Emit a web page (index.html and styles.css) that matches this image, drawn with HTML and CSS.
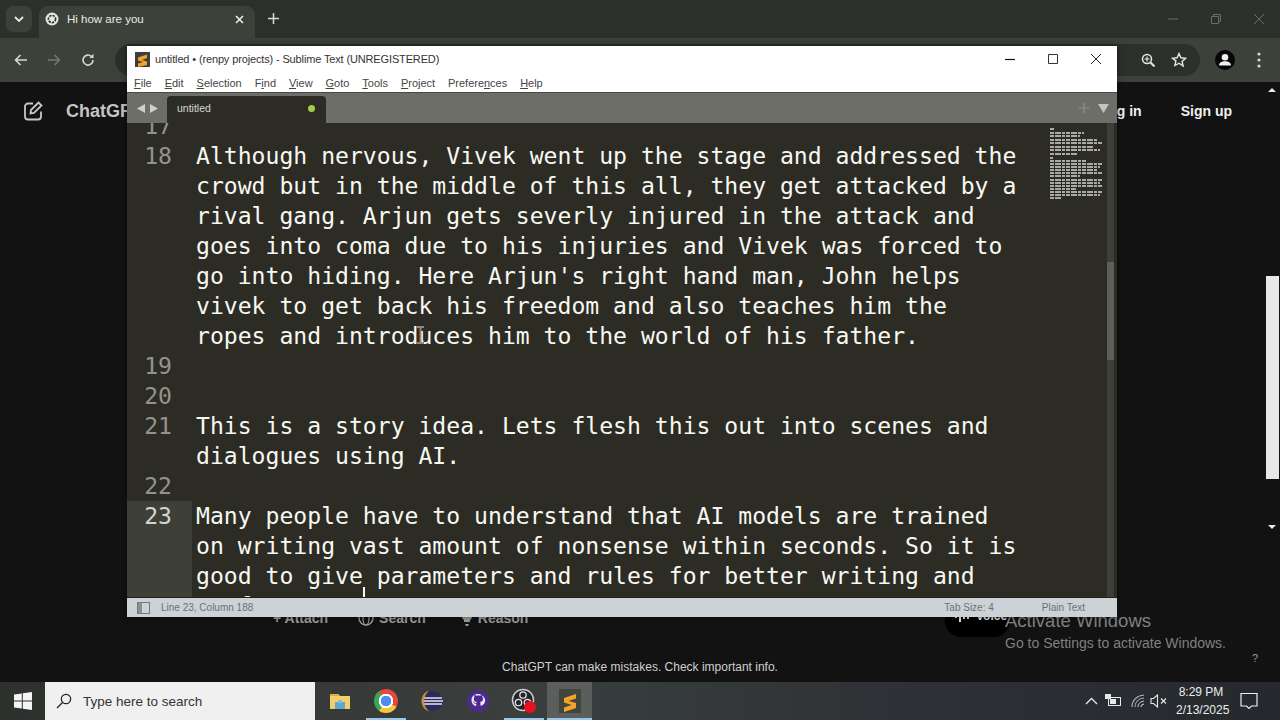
FILE: index.html
```html
<!DOCTYPE html>
<html lang="en">

<head>
    <meta charset="UTF-8" />
    <title>Hi how are you</title>
    <link rel="stylesheet" href="styles.css">
</head>

<body>
    <!-- Browser behind -->
    <div class="browser">
        <div class="tabstrip">
            <div class="tab-menu">
                <svg width="10" height="6" viewBox="0 0 10 6"><path d="M1 1l4 4 4-4" fill="none" stroke="#e6e8e4" stroke-width="1.8"/></svg>
            </div>
            <div class="tab">
                <svg class="favicon" width="14" height="14" viewBox="0 0 14 14"><circle cx="7" cy="7" r="6.5" fill="#e4e6e2"/><circle cx="7" cy="7" r="3.6" fill="none" stroke="#2b2f2a" stroke-width="1.6" stroke-dasharray="2.4 1"/></svg>
                <span class="tab-title">Hi how are you</span>
                <svg class="tab-close" width="9" height="9" viewBox="0 0 9 9"><path d="M1 1l7 7M8 1l-7 7" stroke="#f0f2ee" stroke-width="1.5"/></svg>
            </div>
            <svg class="new-tab" width="11" height="11" viewBox="0 0 11 11"><path d="M5.5 0v11M0 5.5h11" stroke="#d8dad6" stroke-width="1.5"/></svg>
            <div class="win-buttons">
                <div class="win-button"><svg width="10" height="10" viewBox="0 0 10 10"><path d="M0 5h10" stroke="#6a6e69"/></svg></div>
                <div class="win-button"><svg width="10" height="10" viewBox="0 0 10 10"><path d="M.5 2.5h7v7h-7zM2.5 2.5v-2h7v7h-2" fill="none" stroke="#6a6e69"/></svg></div>
                <div class="win-button"><svg width="10" height="10" viewBox="0 0 10 10"><path d="M0 0l10 10M10 0L0 10" stroke="#6a6e69"/></svg></div>
            </div>
        </div>
        <div class="toolbar">
            <div class="nav-button"><svg width="14" height="12" viewBox="0 0 14 12"><path d="M13 6H2M6.5 1l-5 5 5 5" fill="none" stroke="#d6d8d4" stroke-width="1.6"/></svg></div>
            <div class="nav-button"><svg width="14" height="12" viewBox="0 0 14 12"><path d="M1 6h11M7.5 1l5 5-5 5" fill="none" stroke="#747873" stroke-width="1.6"/></svg></div>
            <div class="nav-button"><svg width="14" height="14" viewBox="0 0 14 14"><path d="M12 7a5 5 0 1 1-1.500-3.500" fill="none" stroke="#d6d8d4" stroke-width="1.6"/><path d="M12.5.8V5H8.300z" fill="#d6d8d4"/></svg></div>
            <div class="address">
                <svg width="14" height="14" viewBox="0 0 14 14"><circle cx="6" cy="6" r="4.500" fill="none" stroke="#e6e8e4" stroke-width="1.5"/><path d="M6 3.500v5M3.500 6h5" stroke="#e6e8e4" stroke-width="1.2"/><path d="M9.500 9.500l4 4" stroke="#e6e8e4" stroke-width="2"/></svg>
                <svg width="16" height="16" viewBox="0 0 16 16"><path d="M8 1.500l1.900 4.300 4.600.5-3.400 3.100 1 4.600L8 11.200 3.900 13.500l1-4.600L1.500 6.300l4.600-.5z" fill="none" stroke="#e6e8e4" stroke-width="1.4"/></svg>
            </div>
            <svg class="avatar" width="20" height="20" viewBox="0 0 20 20"><circle cx="10" cy="10" r="10" fill="#060606"/><circle cx="10" cy="7.300" r="3.300" fill="#f0f0f0"/><path d="M4 15.500c0-3 3-4.300 6-4.300s6 1.300 6 4.300z" fill="#f0f0f0"/></svg>
            <svg class="dots" width="4" height="16" viewBox="0 0 4 16"><circle cx="2" cy="2" r="1.6" fill="#d6d8d4"/><circle cx="2" cy="8" r="1.6" fill="#d6d8d4"/><circle cx="2" cy="14" r="1.6" fill="#d6d8d4"/></svg>
        </div>
        <div class="page">
            <div class="page-header">
                <svg width="20" height="20" viewBox="0 0 20 20"><path d="M10 2.500H5a3 3 0 0 0-3 3v10a3 3 0 0 0 3 3h10a3 3 0 0 0 3-3v-5" fill="none" stroke="#c8c8c8" stroke-width="1.8"/><path d="M8 9l7.500-7.500 3 3L11 12l-3.500.5z" fill="none" stroke="#c8c8c8" stroke-width="1.8"/></svg>
                <span class="brand">ChatGPT</span>
                <span class="login">Log in</span>
                <span class="signup">Sign up</span>
            </div>
            <div class="composer-row">
                <span class="composer-item attach">+ Attach</span>
                <span class="composer-item search">
                    <svg width="16" height="16" viewBox="0 0 16 16"><circle cx="8" cy="8" r="7" fill="none" stroke="#9a9a9a" stroke-width="1.4"/><ellipse cx="8" cy="8" rx="3" ry="7" fill="none" stroke="#9a9a9a" stroke-width="1.2"/></svg>
                    Search
                </span>
                <span class="composer-item reason">
                    <svg width="12" height="16" viewBox="0 0 12 16"><path d="M6 1a5 5 0 0 0-3 9v2h6v-2a5 5 0 0 0-3-9zM4 14h4l-1 2H5z" fill="#9a9a9a"/></svg>
                    Reason
                </span>
                <span class="voice">
                    <svg width="18" height="14" viewBox="0 0 18 14"><path d="M2 5v4M6 2v11M10 4v6M14 1v9" stroke="#e8e8e8" stroke-width="2"/></svg>
                    Voice
                </span>
            </div>
            <div class="disclaimer">ChatGPT can make mistakes. Check important info.</div>

            <div class="activate">
                <div class="activate-big">Activate Windows</div>
                <div class="activate-small">Go to Settings to activate Windows.</div>
            </div>
            <div class="help">?</div>
            <div class="page-arrow-up"></div>
            <div class="page-thumb"></div>
            <div class="page-arrow-down"></div>
        </div>
    </div>

    <!-- Taskbar -->
    <div class="taskbar">
        <div class="start">
            <svg width="18" height="18" viewBox="0 0 18 18"><path d="M0 2.500l7.800-1.100v7.100H0zM8.800 1.200L18 0v8.500H8.800zM0 9.500h7.800v7.100L0 15.500zM8.800 9.500H18V18l-9.200-1.200z" fill="#f4f4f4"/></svg>
        </div>
        <div class="search-box">
            <svg width="16" height="16" viewBox="0 0 16 16"><circle cx="10" cy="6" r="4.700" fill="none" stroke="#222" stroke-width="1.2"/><path d="M6.500 9.500L1 15" stroke="#222" stroke-width="1.3"/></svg>
            <span>Type here to search</span>
        </div>
        <div class="task-icons">
            <div class="task-icon">
                <svg width="22" height="20" viewBox="0 0 22 20"><path d="M1 3h8l2 2h10v13H1z" fill="#f3cf6b"/><path d="M1 3h8l2 2H1z" fill="#e0aa3e"/><rect x="6" y="11" width="10" height="7" fill="#5fa8c8"/><rect x="9" y="9" width="4" height="3" fill="#7cc0dc"/></svg>
            </div>
            <div class="task-icon running">
                <div class="chrome-logo"></div>
            </div>
            <div class="task-icon">
                <svg width="24" height="24" viewBox="0 0 24 24"><circle cx="13" cy="12" r="10" fill="#2c2a5c"/><path d="M3 12h20M4 9h18M4 15h18" stroke="#e8e4f0" stroke-width="1.5"/><path d="M9 1.500C4 3.500 1.500 7.500 1.500 12S4 20.500 9 22.500C6 19.500 4 16 4 12s2-7.500 5-10.500z" fill="#c98b45"/></svg>
            </div>
            <div class="task-icon">
                <svg width="24" height="24" viewBox="0 0 24 24"><circle cx="12" cy="12" r="11" fill="#4b2a8c"/><path d="M12 5c-3.900 0-6.500 2.700-6.500 6.200 0 2.800 1.700 5 4.200 5.900.3 0 .5-.1.500-.4v-2c-1.800.4-2.200-.7-2.400-1.200-.4-.7-1-.9-.8-1.100.7-.1 1.200.6 1.500 1 .6 1 1.500.8 1.800.6.100-.5.300-.8.500-1-1.600-.2-3-.9-3-3.300 0-.7.200-1.300.7-1.800-.100-.2-.3-.9.100-1.800 0 0 .6-.2 2 .7.600-.2 1.200-.2 1.800-.2s1.200 0 1.800.2c1.400-.9 2-.7 2-.7.400.9.200 1.600.1 1.800.5.500.7 1.100.7 1.800 0 2.400-1.400 3.100-3 3.300.3.200.5.700.5 1.300v2.100c0 .3.200.4.500.4 2.500-.9 4.200-3.100 4.200-5.900C18.500 7.700 15.900 5 12 5z" fill="#efe8fa"/></svg>
            </div>
            <div class="task-icon running">
                <svg width="26" height="26" viewBox="0 0 26 26"><circle cx="12" cy="12" r="10.500" fill="#23252b" stroke="#c9cbce" stroke-width="1.5"/><circle cx="12" cy="7" r="3.200" fill="none" stroke="#e4e4e4" stroke-width="1.3"/><circle cx="7.500" cy="14.500" r="3.200" fill="none" stroke="#e4e4e4" stroke-width="1.3"/><circle cx="16.500" cy="14.500" r="3.200" fill="none" stroke="#e4e4e4" stroke-width="1.3"/><circle cx="19" cy="19" r="6" fill="#e8101c"/></svg>
            </div>
            <div class="task-icon active">
                <svg width="22" height="24" viewBox="0 0 22 24"><rect width="22" height="24" fill="#44443f"/><path d="M5 9l12-4v4.500L9.500 12 17 14v5L5 23v-4.500l7.500-2.500L5 13.500z" fill="#f2a328"/></svg>
            </div>
        </div>
        <div class="tray">
            <svg class="tray-icon" width="13" height="8" viewBox="0 0 13 8"><path d="M1 7l5.500-5.500L12 7" fill="none" stroke="#e8e8e8" stroke-width="1.3"/></svg>
            <svg class="tray-icon" width="16" height="14" viewBox="0 0 16 14"><rect x="3.500" y="3.500" width="12" height="8" fill="none" stroke="#e8e8e8"/><rect x="5" y="5" width="6" height="5" fill="#e8e8e8"/><rect width="6" height="5" fill="#e8e8e8"/></svg>
            <svg class="tray-icon tray-wifi" width="15" height="14" viewBox="0 0 15 14"><path d="M1 13C1 6 6 1.500 13 1M4 13c0-5 3.500-8.500 9-9M7 13c0-3 2.500-5.500 6-6M10 13c0-1.500 1-2.500 3-3" fill="none" stroke="#b4b8ba" stroke-width="1.1"/></svg>
            <svg class="tray-icon" width="18" height="14" viewBox="0 0 18 14"><path d="M1 4.500h2.500L7.500 1v12L3.500 9.500H1z" fill="none" stroke="#e8e8e8" stroke-width="1.1"/><path d="M11 4.500l5 5M16 4.500l-5 5" stroke="#e8e8e8" stroke-width="1.1"/></svg>
            <div class="clock">
                <div>8:29 PM</div>
                <div>2/13/2025</div>
            </div>
            <svg class="notify" width="18" height="18" viewBox="0 0 18 18"><path d="M1 1.500h16V14h-5.500L9 16.500 6.500 14H1z" fill="none" stroke="#ececec" stroke-width="1.2"/></svg>
        </div>
    </div>

    <!-- Sublime Text window -->
    <div class="sublime">
        <div class="titlebar">
            <svg class="app-icon" width="15" height="15" viewBox="0 0 15 15"><rect width="15" height="15" fill="#3e3e3a"/><path d="M3 5.500l9-3V6L7 8l5 1.500V13l-9 2v-3.500L8 10 3 8.500z" fill="#f2a328"/></svg>
            <span class="title-text">untitled • (renpy projects) - Sublime Text (UNREGISTERED)</span>
            <div class="title-buttons">
                <div class="title-button"><svg width="10" height="10" viewBox="0 0 10 10"><path d="M0 5.500h10" stroke="#111" stroke-width="1.2"/></svg></div>
                <div class="title-button"><svg width="10" height="10" viewBox="0 0 10 10"><path d="M.5.500h9v9h-9z" fill="none" stroke="#333"/></svg></div>
                <div class="title-button"><svg width="10" height="10" viewBox="0 0 10 10"><path d="M0 0l10 10M10 0L0 10" stroke="#222"/></svg></div>
            </div>
        </div>
        <div class="menubar">
            <span><u>F</u>ile</span>
            <span><u>E</u>dit</span>
            <span><u>S</u>election</span>
            <span>F<u>i</u>nd</span>
            <span><u>V</u>iew</span>
            <span><u>G</u>oto</span>
            <span><u>T</u>ools</span>
            <span><u>P</u>roject</span>
            <span>Prefere<u>n</u>ces</span>
            <span><u>H</u>elp</span>
        </div>
        <div class="sheet-tabs">
            <div class="tab-arrows">
                <svg width="9" height="9" viewBox="0 0 9 9"><path d="M8 0v9L0 4.500z" fill="#cfd0cb"/></svg>
                <svg width="9" height="9" viewBox="0 0 9 9"><path d="M1 0v9l8-4.500z" fill="#cfd0cb"/></svg>
            </div>
            <div class="sheet-tab">
                <span>untitled</span>
                <i class="dirty-dot"></i>
            </div>
            <div class="tab-tools">
                <svg width="10" height="10" viewBox="0 0 10 10"><path d="M5 0v10M0 5h10" stroke="#8f908a" stroke-width="1.2"/></svg>
                <svg width="11" height="9" viewBox="0 0 11 9"><path d="M0 0h11L5.500 9z" fill="#c4c5c0"/></svg>
            </div>
        </div>
        <div class="editor">
            <div class="lines">
                <div class="row"><div class="num">17</div><div class="code"></div></div>
                <div class="row"><div class="num">18</div><div class="code">Although nervous, Vivek went up the stage and addressed the crowd but in the middle of this all, they get attacked by a rival gang. Arjun gets severly injured in the attack and goes into coma due to his injuries and Vivek was forced to go into hiding. Here Arjun's right hand man, John helps vivek to get back his freedom and also teaches him the ropes and introduces him to the world of his father.</div></div>
                <div class="row"><div class="num">19</div><div class="code"></div></div>
                <div class="row"><div class="num">20</div><div class="code"></div></div>
                <div class="row"><div class="num">21</div><div class="code">This is a story idea. Lets flesh this out into scenes and dialogues using AI.</div></div>
                <div class="row"><div class="num">22</div><div class="code"></div></div>
                <div class="row current"><div class="num">23</div><div class="code">Many people have to understand that AI models are trained on writing vast amount of nonsense within seconds. So it is good to give parameters and rules for better writing and craft scenes<span class="caret"></span></div></div>
            </div>
            <svg class="minimap" width="54" height="72" viewBox="0 0 54 72">
                <path d="M1 2h4M1 6h34M1 9h30M1 13h48M1 16h52M1 20h44M1 23h50M1 27h28M1 31h3M1 34h36M1 37h52M1 40h50M1 43h48M1 46h52M1 49h30M1 53h52M1 56h50M1 59h52M1 62h26M1 65h52M1 68h50M1 71h12" stroke="#a9aaa4" stroke-width="1.8" stroke-dasharray="4 1 6 1 3 1"/>
            </svg>
            <div class="scrollbar"><div class="thumb"></div></div>
            <!-- mouse pointer -->
            <svg class="ibeam" width="9" height="18" viewBox="0 0 9 18"><path d="M1 1h2.500l1 1 1-1H8M4.500 2v14M1 17h2.500l1-1 1 1H8" fill="none" stroke="#8a8a8a" stroke-width="1.8"/></svg>
        </div>
        <div class="statusbar">
            <svg width="13" height="12" viewBox="0 0 13 12"><rect x=".5" y=".5" width="12" height="11" fill="none" stroke="#777"/><rect x="1" y="1" width="4" height="10" fill="#8b8f92"/></svg>
            <span class="status-pos">Line 23, Column 188</span>
            <span class="status-tab">Tab Size: 4</span>
            <span class="status-syntax">Plain Text</span>
        </div>
    </div>
</body>

</html>
```

FILE: styles.css
```css
* {
    box-sizing: border-box;
}

body {
    margin: 0;
    width: 1280px;
    height: 720px;
    position: relative;
    overflow: hidden;
    display: flex;
    flex-direction: column;
    background: #121212;
    font-family: 'Liberation Sans', Arial, sans-serif;
}

/* Browser */
.browser {
    flex: 1;
    display: flex;
    flex-direction: column;
    min-height: 0;
}

.tabstrip {
    height: 38px;
    background: #2b302a;
    display: flex;
    align-items: flex-end;
    padding-left: 6px;
}

.tab-menu {
    width: 26px;
    height: 26px;
    margin-bottom: 6px;
    background: #3c423a;
    border-radius: 7px;
    display: flex;
    align-items: center;
    justify-content: center;
}

.tab {
    width: 216px;
    height: 32px;
    margin-left: 7px;
    background: #3c423a;
    border-radius: 9px 9px 0 0;
    display: flex;
    align-items: center;
    padding: 0 11px 6px 6px;
    color: #e8eae6;
    font-size: 11.5px;
}

.tab-title {
    margin-left: 8px;
    flex: 1;
}

.new-tab {
    margin: 0 0 14px 13px;
}

.win-buttons {
    margin-left: auto;
    align-self: stretch;
    display: flex;
}

.win-button {
    width: 43px;
    display: flex;
    align-items: center;
    justify-content: center;
}

.toolbar {
    height: 44px;
    background: #3c423a;
    display: flex;
    align-items: center;
    padding-left: 4px;
}

.nav-button {
    width: 33.5px;
    display: flex;
    justify-content: center;
}

.address {
    width: 1085px;
    height: 32px;
    margin-left: 10px;
    background: #2b302a;
    border-radius: 16px;
    display: flex;
    align-items: center;
    justify-content: flex-end;
    gap: 16px;
    padding-right: 13px;
}

.avatar {
    margin-left: 15px;
}

.dots {
    margin-left: 22px;
}

.page {
    flex: 1;
    position: relative;
    background: #121212;
    display: flex;
    flex-direction: column;
}

.page-header {
    height: 58px;
    display: flex;
    align-items: center;
    padding: 0 48px 0 23px;
    font-weight: bold;
    font-size: 14px;
}

.brand {
    margin-left: 23px;
    color: #c4c4c4;
    font-size: 18px;
}

.login {
    margin-left: auto;
    color: #f0f0f0;
}

.signup {
    margin-left: 39px;
    color: #f0f0f0;
}

.composer-row {
    margin-top: 468px;
    height: 20px;
    display: flex;
    align-items: center;
    padding-left: 273px;
    font-size: 14px;
    color: #9a9a9a;
}

.composer-item {
    display: flex;
    align-items: center;
    gap: 5px;
    font-weight: bold;
}

.search {
    margin-left: 30px;
}

.reason {
    margin-left: 35px;
}

.voice {
    margin: 6px 270px 0 auto;
    width: 65px;
    height: 32px;
    display: flex;
    align-items: flex-start;
    gap: 4px;
    padding: 4px 0 0 9px;
    background: #000;
    color: #e8e8e8;
    font-weight: bold;
    font-size: 12px;
    border-radius: 16px;
}

.disclaimer {
    margin-top: 32px;
    text-align: center;
    font-size: 12px;
    color: #cfcfcf;
}

.activate {
    position: absolute;
    left: 1005px;
    top: 528px;
    color: #808080;
}

.activate-big {
    font-size: 18.5px;
    line-height: 22px;
}

.activate-small {
    font-size: 14px;
    line-height: 20px;
    margin-top: 1px;
}

.help {
    position: absolute;
    left: 1252px;
    top: 570px;
    font-size: 11px;
    color: #9a9a9a;
}

.page-thumb {
    position: absolute;
    left: 1266px;
    top: 194px;
    width: 13px;
    height: 203px;
    background: #e8e8e8;
}

.page-arrow-up,
.page-arrow-down {
    position: absolute;
    left: 1268px;
    width: 8px;
    height: 4px;
    border-left: 4px solid transparent;
    border-right: 4px solid transparent;
}

.page-arrow-up {
    top: 6px;
    border-bottom: 4px solid #e8e8e8;
}

.page-arrow-down {
    top: 443px;
    border-top: 4px solid #e8e8e8;
}

/* Taskbar */
.taskbar {
    height: 38px;
    display: flex;
    background: linear-gradient(90deg, #2d312d, #3a3f3e 40%, #2e3236 70%, #25282c);
    color: #ececec;
}

.start {
    width: 45px;
    display: flex;
    align-items: center;
    justify-content: center;
}

.search-box {
    width: 270px;
    background: #f0f0f0;
    display: flex;
    align-items: center;
    gap: 11px;
    padding-left: 11px;
    color: #333;
    font-size: 13.5px;
}

.task-icons {
    margin-left: 2px;
    display: flex;
}

.task-icon {
    width: 46px;
    display: flex;
    align-items: center;
    justify-content: center;
    position: relative;
}

.task-icon.active {
    background: #5a5e5d;
    width: 45px;
}

.task-icon.running::after,
.task-icon.active::after {
    content: "";
    position: absolute;
    left: 3px;
    right: 3px;
    bottom: 0;
    height: 2px;
    background: #9cc7e8;
}

.task-icon.active::after {
    left: 0;
    right: 0;
}

.chrome-logo {
    width: 24px;
    height: 24px;
    border-radius: 50%;
    background:
        radial-gradient(circle, #4f8ef0 0 5px, #fff 5.5px 7px, transparent 7.5px),
        conic-gradient(#e6483a 0 33%, #f7c53a 33% 60%, #3aa757 60% 90%, #e6483a 90%);
}

.tray {
    margin-left: auto;
    display: flex;
    align-items: center;
    padding-right: 22px;
}

.tray-icon {
    margin-right: 7px;
}

.tray-wifi {
    margin: 0 4.5px 0 2.5px;
}

.clock {
    width: 50px;
    margin-left: 1px;
    text-align: center;
    font-size: 12px;
    line-height: 18px;
    white-space: nowrap;
}

.notify {
    margin-left: 14px;
}

/* Sublime window, it floats over the browser */
.sublime {
    position: absolute;
    left: 127px;
    top: 46px;
    width: 990px;
    height: 571px;
    display: flex;
    flex-direction: column;
    background: #2c2c25;
    box-shadow: 0 0 6px rgba(0, 0, 0, 0.5);
}

.titlebar {
    height: 26px;
    background: #fff;
    display: flex;
    align-items: center;
    padding-left: 8px;
    font-size: 11px;
    letter-spacing: -0.14px;
    color: #333;
}

.title-text {
    margin-left: 5px;
}

.title-buttons {
    margin-left: auto;
    display: flex;
}

.title-button {
    width: 43px;
    display: flex;
    justify-content: center;
}

.menubar {
    height: 21px;
    background: #fff;
    border-bottom: 1px solid #4a4a45;
    display: flex;
    align-items: center;
    gap: 13px;
    padding: 2px 0 0 7px;
    font-size: 11px;
    letter-spacing: -0.02px;
    color: #444;
}

.sheet-tabs {
    height: 30px;
    background: #6d6e67;
    display: flex;
    align-items: flex-end;
}

.tab-arrows {
    width: 40px;
    align-self: center;
    display: flex;
    justify-content: center;
    gap: 3px;
}

.sheet-tab {
    width: 159px;
    height: 27px;
    background: #2c2c25;
    border-radius: 4px 4px 0 0;
    display: flex;
    align-items: center;
    justify-content: space-between;
    padding: 0 11px 3px 10px;
    font-size: 10.5px;
    color: #d8d8d2;
}

.dirty-dot {
    width: 7px;
    height: 7px;
    border-radius: 50%;
    background: #a6c94e;
}

.tab-tools {
    margin-left: auto;
    align-self: center;
    display: flex;
    align-items: center;
    gap: 9px;
    padding-right: 8px;
}

.editor {
    flex: 1;
    min-height: 0;
    position: relative;
    display: flex;
    overflow: hidden;
}

.lines {
    width: 922px;
    margin-top: -12px;
}

.row {
    display: flex;
}

.num {
    width: 65px;
    padding-right: 20px;
    text-align: right;
    color: #92938c;
    font: 23.1px/30px 'DejaVu Sans Mono', monospace;
}

.row.current .num {
    background: #3e3f36;
    color: #d4d4ce;
}

.code {
    width: 59.5ch;
    margin-left: 4px;
    color: #f8f8f2;
    font: 23.1px/30px 'DejaVu Sans Mono', monospace;
}

.caret {
    position: absolute;
    width: 2px;
    height: 30px;
    margin-top: -4px;
    background: #f8f8f0;
}

.minimap {
    margin-top: 4px;
}

.scrollbar {
    width: 7px;
    margin: 0 3px 0 4px;
    background: #3d3e37;
}

.thumb {
    height: 98px;
    margin-top: 139px;
    background: #5e5f59;
}

.ibeam {
    position: absolute;
    left: 289px;
    top: 203px;
}

.statusbar {
    height: 20px;
    background: #cdd2d6;
    border-top: 1px solid #20201c;
    display: flex;
    align-items: center;
    padding-left: 10px;
    font-size: 10px;
    color: #6c7175;
}

.status-pos {
    margin-left: 11px;
}

.status-tab {
    margin-left: auto;
}

.status-syntax {
    margin: 0 32px 0 48px;
}
```
